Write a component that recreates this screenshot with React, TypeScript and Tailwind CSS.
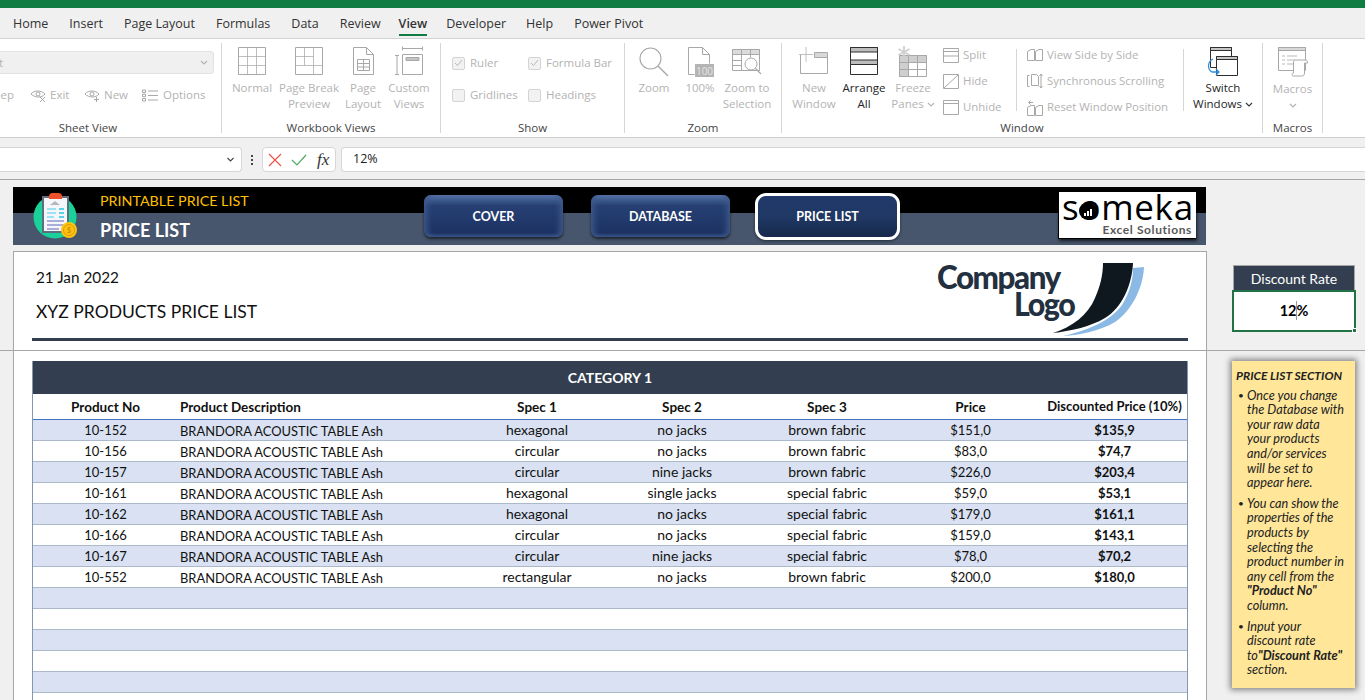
import React from "react";

const G = "#a8a8a8";

function Chev({ c = "#9a9a9a", w = 8 }: { c?: string; w?: number }) {
  return (
    <svg width={w} height={5} viewBox="0 0 8 5" fill="none" stroke={c} strokeWidth="1.1">
      <path d="M1 1l3 3 3-3" />
    </svg>
  );
}

function INormal() {
  return (
    <svg width="30" height="30" viewBox="0 0 30 30" fill="none" stroke={G}>
      <path d="M1.5 1.5h27v27h-27z" />
      <path d="M10.5 1.5v27M19.5 1.5v27M1.5 10.5h27M1.5 19.5h27" strokeOpacity="0.75" />
    </svg>
  );
}
function IBreak() {
  return (
    <svg width="30" height="30" viewBox="0 0 30 30" fill="none" stroke={G}>
      <path d="M1.5 1.5h27v27h-27z" />
      <path d="M10.5 1.5v18M19.5 1.5v27M1.5 10.5h18M1.5 19.5h27" strokeOpacity="0.75" />
    </svg>
  );
}
function ILayout() {
  return (
    <svg width="24" height="30" viewBox="0 0 24 30" fill="none" stroke={G}>
      <path d="M2.5 1.5h13l7 7v20h-20z" />
      <path d="M15.5 1.5v7h7" />
      <path d="M6.5 13.5h12v11h-12zM6.5 17.5h12M6.5 21h12M12.5 13.5v11" />
    </svg>
  );
}
function ICustom() {
  return (
    <svg width="30" height="30" viewBox="0 0 30 30" fill="none" stroke={G}>
      <path d="M8.5 2.5h20M8.5 .5v4M28.5 .5v4" />
      <path d="M1 9.5h4M1 28.5h4M3 9.5v19" />
      <path d="M8.5 8.5h20v20h-20z" />
      <path d="M12 11.5h13v3h-13z" fill="#c4c4c4" />
    </svg>
  );
}
function IZoom() {
  return (
    <svg width="32" height="32" viewBox="0 0 32 32" fill="none" stroke={G} strokeWidth="1.1">
      <circle cx="12.5" cy="12.5" r="10.5" />
      <path d="M20 20l10 10" strokeWidth="1.4" />
    </svg>
  );
}
function I100() {
  return (
    <svg width="28" height="32" viewBox="0 0 28 32" fill="none" stroke={G}>
      <path d="M2.5 28.5v-27h14l7 7v9" />
      <path d="M16.5 1.5v7h7M2.5 28.5h6" />
      <rect x="9" y="18" width="19" height="13" fill="#b4b4b4" stroke="none" />
      <text x="18.5" y="28.5" textAnchor="middle" fontSize="10" fill="#e4e4e4" stroke="none" fontFamily="Open Sans">
        100
      </text>
    </svg>
  );
}
function IZoomSel() {
  return (
    <svg width="32" height="32" viewBox="0 0 32 32" fill="none" stroke={G}>
      <path d="M1.5 3.5h27v21h-27z" />
      <path d="M1.5 3.5h27v5h-27z" fill="#dcdcdc" />
      <path d="M10.5 3.5v21M19.5 3.5v8M1.5 14.5h9M1.5 19.5h9" />
      <circle cx="20" cy="18" r="6" fill="#fff" />
      <path d="M24.5 22.5l5.5 5.5" strokeWidth="1.3" />
    </svg>
  );
}
function INewWin() {
  return (
    <svg width="32" height="30" viewBox="0 0 32 30" fill="none" stroke={G}>
      <path d="M2.5 8.500v19h27v-19H16" />
      <path d="M16.5 6.500h13v5h-13z" fill="#d8d8d8" />
      <path d="M8 1v15M1 8.500h14" strokeOpacity=".7" />
    </svg>
  );
}
function IArrange() {
  return (
    <svg width="30" height="30" viewBox="0 0 30 30" fill="none" stroke="#2e2e2e">
      <path d="M1.5 1.5h27v27h-27z" fill="#fff" />
      <path d="M1.5 1.5h27v4.5h-27zM1.5 14h27v4.5h-27z" fill="#bdbdbd" />
    </svg>
  );
}
function IFreeze() {
  return (
    <svg width="32" height="32" viewBox="0 0 32 32" fill="none" stroke={G}>
      <path d="M2.5 9.500h27v21h-27z" />
      <path d="M2.5 9.500h27v7h-27zM2.5 16.500h9v14h-9z" fill="#cfcfcf" />
      <path d="M11.500 9.500v21M20.500 9.500v21M2.500 23.500h27" />
      <path d="M7 0v12M1.5 3l11 6M12.500 3l-11 6" stroke="#d0d0d0" strokeWidth="1.8" />
    </svg>
  );
}
function ISplit() {
  return (
    <svg width="16" height="15" viewBox="0 0 16 15" fill="none" stroke={G}>
      <path d="M.5.5h15v14H.5zM.5 3.500h15M.5 8h15" />
    </svg>
  );
}
function IHide() {
  return (
    <svg width="16" height="15" viewBox="0 0 16 15" fill="none" stroke={G}>
      <path d="M.5.5h15v14H.5zM1 14L15 1" />
    </svg>
  );
}
function IUnhide() {
  return (
    <svg width="16" height="15" viewBox="0 0 16 15" fill="none" stroke={G}>
      <path d="M.5.5h15v14H.5zM.5 3.500h15" />
    </svg>
  );
}
function ISide() {
  return (
    <svg width="16" height="12" viewBox="0 0 16 12" fill="none" stroke={G}>
      <path d="M.5 2.500L4 .5h3.500v11H.5zM8.500 2.500L12 .5h3.500v11h-7z" />
    </svg>
  );
}
function ISync() {
  return (
    <svg width="16" height="16" viewBox="0 0 16 16" fill="none" stroke={G}>
      <path d="M2.500 2.500H.5v11h2M4.500 1.500h5l2 2v9h-7z" />
      <path d="M14 1v14M12.500 3L14 1l1.500 2M12.500 13l1.500 2 1.500-2" />
    </svg>
  );
}
function IReset() {
  return (
    <svg width="16" height="17" viewBox="0 0 16 17" fill="none" stroke={G}>
      <path d="M.5 8.500L4 6.500h3.500v10H.5zM8.500 8.500L12 6.500h3.500v10h-7z" />
      <path d="M6 3.500H2M3.500 1.500l-2 2 2 2" />
    </svg>
  );
}
function ISwitch() {
  return (
    <svg width="32" height="30" viewBox="0 0 32 30" fill="none">
      <path d="M3.500 1.500h21v20h-21z" stroke="#2e2e2e" fill="#fff" />
      <path d="M3.500 1.500h21v3h-21z" stroke="#2e2e2e" fill="#c8c6c4" />
      <path d="M9.500 10.500h21v19h-21z" stroke="#2e2e2e" fill="#fff" />
      <path d="M9.500 10.500h21v3h-21z" stroke="#2e2e2e" fill="#c8c6c4" />
      <path d="M6 13C1 15-.5 23 5 26h7M9 23l3 3-3 3" stroke="#2f8fdc" strokeWidth="1.3" />
    </svg>
  );
}
function IMacros() {
  return (
    <svg width="30" height="32" viewBox="0 0 30 32" fill="none" stroke={G}>
      <path d="M.5 1.500h27v23H.5z" />
      <path d="M.5 1.500h27v3H.5z" fill="#d8d8d8" />
      <path d="M4 10h3M9 10h10M4 14h3M9 14h8M4 18h3M9 18h8" strokeOpacity=".8" />
      <path d="M17 14h10c2 0 3 1 2.500 3h-3v10c0 2-1 3-3 3h-8c-2 0-2-3 0-3V16c0-1 1-2 1.500-2z" fill="#fff" />
    </svg>
  );
}

function Btn({ w, icon, a, b, dark, chev }: { w: string; icon: React.ReactNode; a: string; b?: React.ReactNode; dark?: boolean; chev?: boolean }) {
  return (
    <div className={`${w} flex flex-col items-center text-[11.5px] leading-[16px] ${dark ? "text-[#262626]" : "text-[#b3b3b3]"}`}>
      <div className="h-[35px] flex justify-center items-start pt-[1px]">{icon}</div>
      <div className="whitespace-nowrap">{a}</div>
      <div className="whitespace-nowrap flex items-center gap-[3px]">
        {b}
        {chev && <Chev c={dark ? "#333" : "#b3b3b3"} />}
      </div>
    </div>
  );
}

function Sep() {
  return <div className="w-px bg-[#d6d6d6] my-[4px] shrink-0" />;
}

function Group({ w, label, children, labelClass = "" }: { w: string; label: string; children: React.ReactNode; labelClass?: string }) {
  return (
    <div className={`${w} shrink-0 flex flex-col overflow-hidden pt-[6px]`}>
      <div className="flex-1 flex min-h-0">{children}</div>
      <div className={`h-[17px] leading-[15px] text-center text-[11.5px] text-[#444] ${labelClass}`}>{label}</div>
    </div>
  );
}

function Check({ on, label, w }: { on?: boolean; label: string; w: string }) {
  return (
    <div className={`${w} h-[20px] flex items-center gap-[5px] text-[11.5px] text-[#b3b3b3]`}>
      <div className="w-[13px] h-[13px] rounded-[2px] border border-[#d4d4d4] bg-[#f2f2f2] flex items-center justify-center">
        {on && (
          <svg width="9" height="8" viewBox="0 0 9 8" fill="none" stroke="#b8b8b8">
            <path d="M1 4l2.500 2.500L8 1" />
          </svg>
        )}
      </div>
      <span className="whitespace-nowrap">{label}</span>
    </div>
  );
}

function SmallRow({ icon, label }: { icon: React.ReactNode; label: string }) {
  return (
    <div className="h-[20px] flex items-center text-[11.4px] text-[#b3b3b3] whitespace-nowrap">
      <div className="w-[20px] flex items-center">{icon}</div>
      <span>{label}</span>
    </div>
  );
}

function Ribbon() {
  return (
    <div className="h-[99px] bg-white border-b border-[#cfcfcf] flex">
      <Group w="w-[221px]" label="Sheet View" labelClass="pr-[45px]">
        <div className="flex flex-col text-[11.5px] text-[#b3b3b3]">
          <div className="mt-[6px] -ml-[60px] w-[274px] h-[23px] bg-[#f0f0f0] border border-[#e2e2e2] rounded-[3px] flex items-center justify-between pl-[23px] pr-[5px]">
            <span>Default</span>
            <Chev c="#b3b3b3" />
          </div>
          <div className="mt-[11px] h-[20px] flex items-center whitespace-nowrap">
            <span className="-ml-[13px] w-[29px]">Keep</span>
            <svg className="ml-[14px]" width="17" height="13" viewBox="0 0 17 13" fill="none" stroke={G}>
              <path d="M1 5c3-4 10-4 14 0-3 4-10 4-14 0z" />
              <circle cx="8" cy="5" r="2" />
              <path d="M10 8l5 5M15 8l-5 5" />
            </svg>
            <span className="ml-[3px] w-[34px]">Exit</span>
            <svg width="17" height="13" viewBox="0 0 17 13" fill="none" stroke={G}>
              <path d="M1 5c3-4 10-4 14 0-3 4-10 4-14 0z" />
              <circle cx="8" cy="5" r="2" />
              <path d="M12.500 8v5M10 10.500h5" />
            </svg>
            <span className="ml-[3px] w-[38px]">New</span>
            <svg width="16" height="13" viewBox="0 0 16 13" fill="none" stroke={G}>
              <path d="M.5 1h3v2.500h-3zM.5 5.200h3v2.500h-3zM.5 9.500h3V12h-3zM6 2h10M6 6.500h10M6 11h10" />
            </svg>
            <span className="ml-[5px]">Options</span>
          </div>
        </div>
      </Group>
      <Sep />
      <Group w="w-[218px]" label="Workbook Views">
        <div className="flex pl-[1px]">
          <Btn w="w-[58px]" icon={<INormal />} a="Normal" />
          <Btn w="w-[56px]" icon={<IBreak />} a="Page Break" b="Preview" />
          <Btn w="w-[52px]" icon={<ILayout />} a="Page" b="Layout" />
          <Btn w="w-[40px]" icon={<ICustom />} a="Custom" b="Views" />
        </div>
      </Group>
      <Sep />
      <Group w="w-[183px]" label="Show">
        <div className="pl-[11px] pt-[8px] flex flex-col gap-[12px]">
          <div className="flex">
            <Check on label="Ruler" w="w-[76px]" />
            <Check on label="Formula Bar" w="w-[90px]" />
          </div>
          <div className="flex">
            <Check label="Gridlines" w="w-[76px]" />
            <Check label="Headings" w="w-[90px]" />
          </div>
        </div>
      </Group>
      <Sep />
      <Group w="w-[156px]" label="Zoom">
        <div className="flex pl-[1px]">
          <Btn w="w-[56px]" icon={<IZoom />} a="Zoom" />
          <Btn w="w-[36px]" icon={<I100 />} a="100%" />
          <Btn w="w-[58px]" icon={<IZoomSel />} a="Zoom to" b="Selection" />
        </div>
      </Group>
      <Sep />
      <Group w="w-[480px]" label="Window">
        <div className="flex pl-[4px]">
          <Btn w="w-[56px]" icon={<INewWin />} a="New" b="Window" />
          <Btn w="w-[44px]" icon={<IArrange />} a="Arrange" b="All" dark />
          <Btn w="w-[54px]" icon={<IFreeze />} a="Freeze" b="Panes" chev />
          <div className="ml-[3px] w-[73px] flex flex-col gap-[6px]">
            <SmallRow icon={<ISplit />} label="Split" />
            <SmallRow icon={<IHide />} label="Hide" />
            <SmallRow icon={<IUnhide />} label="Unhide" />
          </div>
          <div className="w-px h-[62px] mt-[4px] bg-[#d6d6d6]" />
          <div className="ml-[10px] w-[156px] flex flex-col gap-[6px]">
            <SmallRow icon={<ISide />} label="View Side by Side" />
            <SmallRow icon={<ISync />} label="Synchronous Scrolling" />
            <SmallRow icon={<IReset />} label="Reset Window Position" />
          </div>
          <div className="w-px h-[62px] mt-[4px] bg-[#d6d6d6]" />
          <Btn w="w-[78px]" icon={<ISwitch />} a="Switch" b="Windows" dark chev />
        </div>
      </Group>
      <Sep />
      <Group w="w-[59px]" label="Macros">
        <div className="w-full flex flex-col items-center text-[11.5px] text-[#b3b3b3] leading-[16px]">
          <div className="h-[36px] pt-[1px]">
            <IMacros />
          </div>
          <div>Macros</div>
          <div className="h-[16px] flex items-center">
            <Chev c="#b3b3b3" />
          </div>
        </div>
      </Group>
      <Sep />
    </div>
  );
}

function FormulaBar() {
  return (
    <div className="h-[42px] bg-[#f0f0f0] border-b border-[#a6a6a6] pt-[9px] flex items-start">
      <div className="w-[242px] h-[25px] bg-white border border-[#d6d6d6] border-l-0 rounded-r-[4px] flex items-center justify-end pr-[5px]">
        <Chev c="#444" w={11} />
      </div>
      <div className="w-[20px] h-[25px] flex flex-col items-center justify-center gap-[2px]">
        <i className="w-[2px] h-[2px] bg-[#444] block" />
        <i className="w-[2px] h-[2px] bg-[#444] block" />
        <i className="w-[2px] h-[2px] bg-[#444] block" />
      </div>
      <div className="w-[74px] h-[25px] bg-white border border-[#d6d6d6] rounded-[4px] flex items-center pl-[5px] gap-[9px]">
        <svg width="14" height="14" viewBox="0 0 14 14" fill="none" stroke="#e8534a" strokeWidth="1.2">
          <path d="M1 1l12 12M13 1L1 13" />
        </svg>
        <svg width="16" height="12" viewBox="0 0 16 12" fill="none" stroke="#4fa866" strokeWidth="1.2">
          <path d="M1 6l5 5L15 1" />
        </svg>
        <span className="ml-[1px] font-['Liberation_Serif',serif] italic text-[17px] leading-[20px] text-[#333]">fx</span>
      </div>
      <div className="ml-[5px] flex-1 h-[25px] bg-white border border-[#d6d6d6] border-r-0 rounded-l-[4px] flex items-center pl-[11px] text-[12.5px] text-[#222]">
        12%
      </div>
    </div>
  );
}

function Clip() {
  return (
    <svg width="48" height="48" viewBox="0 0 48 48" fill="none">
      <circle cx="22" cy="24" r="21.500" fill="#1ad199" />
      <path d="M9 3h27v37H9z" fill="#5f6d80" />
      <path d="M11 5h23v33H11z" fill="#f4f6fa" />
      <path d="M16 3c0-2 2-3 3-3h7c1 0 3 1 3 3v3H16z" fill="#f0512d" />
      <path d="M17 12l5-4 5 4z" fill="#b4b7bd" />
      <path d="M14 16h9M14 20h9M14 24h7" stroke="#7fdcf0" strokeWidth="1.4" />
      <path d="M26 16h5M26 20h5M26 24h5" stroke="#27c3e6" strokeWidth="1.4" />
      <path d="M14 28h17M14 32h17M14 36h12" stroke="#8f95d0" strokeWidth="1.6" />
      <circle cx="36" cy="37" r="8" fill="#fbc512" />
      <circle cx="36" cy="37" r="5.500" fill="none" stroke="#e29a05" />
      <text x="36" y="40" textAnchor="middle" fontSize="8" fontWeight="700" fill="#d98d00" fontFamily="Lato">$</text>
    </svg>
  );
}

function NavBtn({ label, active }: { label: string; active?: boolean }) {
  return active ? (
    <div className="w-[145px] h-[47px] pt-[1px] rounded-[11px] border-[3px] border-white bg-gradient-to-b from-[#22396a] via-[#1f3864] to-[#17294c] shadow-[0_1px_3px_rgba(0,0,0,.5)] flex items-center justify-center text-white font-bold text-[12.5px]">
      {label}
    </div>
  ) : (
    <div className="w-[139px] h-[42px] pt-[2px] rounded-[7px] bg-[linear-gradient(180deg,#5a76aa_0%,#3a5688_14%,#263f72_26%,#21396b_60%,#1d3263_90%,#3a5487_100%)] shadow-[inset_7px_0_6px_-4px_#3f5a8c,inset_-7px_0_6px_-4px_#3f5a8c,0_2px_3px_rgba(0,0,0,.6)] flex items-center justify-center text-white font-bold text-[12.5px]">
      {label}
    </div>
  );
}

function Banner() {
  return (
    <div className="relative w-[1193px] h-[58px] flex flex-col">
      <div className="h-[26px] bg-black pl-[87px] text-[14.3px] leading-[27px] text-[#ffc000]">PRINTABLE PRICE LIST</div>
      <div className="h-[32px] bg-[#47566c] pl-[87px] text-[18px] leading-[34px] font-bold text-white">PRICE LIST</div>
      <div className="absolute left-[20px] top-[6px]">
        <Clip />
      </div>
      <div className="absolute left-[411px] top-[8px] flex gap-[28px]">
        <NavBtn label="COVER" />
        <NavBtn label="DATABASE" />
      </div>
      <div className="absolute left-[742px] top-[6px]">
        <NavBtn label="PRICE LIST" active />
      </div>
      <div className="absolute left-[1045px] top-[5px] w-[138px] h-[47px] bg-white border-l border-b border-black shadow-[1px_2px_3px_rgba(0,0,0,.7)] text-black">
        <div className="h-[30px] pl-[3px] text-[35px] leading-[30px] font-['Open_Sans',sans-serif] font-medium tracking-[.7px] whitespace-nowrap">someka</div>
        <div className="absolute left-[20px] top-[10px] w-[18px] h-[18px] rounded-full bg-black flex items-end justify-center gap-[1px] pb-[4px]">
          <i className="block w-[2px] h-[3px] bg-white" />
          <i className="block w-[2px] h-[5px] bg-white" />
          <i className="block w-[2px] h-[7px] bg-white" />
        </div>
        <div className="absolute right-[4px] bottom-[1px] text-[12px] leading-[14px] font-bold text-[#595959] tracking-[.6px]">Excel Solutions</div>
      </div>
    </div>
  );
}

function CompanyLogo() {
  return (
    <div className="absolute left-[909px] top-[7px] w-[229px] h-[78px]">
      <svg className="absolute left-0 top-0" width="229" height="78" viewBox="923 259 229 78">
        <path d="M1133 268L1144 267C1143 290 1130 312 1115 322C1100 331 1080 335 1063 336C1085 331 1110 322 1122 305C1130 292 1133 280 1133 268Z" fill="#89b9e4" />
        <path d="M1103 263L1133 263C1132 285 1122 308 1105 318C1090 327 1070 331 1053 333C1072 327 1088 315 1095 298C1100 287 1103 275 1103 263Z" fill="#10181f" />
      </svg>
      <div className="absolute left-[14px] -top-[1px] text-[33px] leading-[36px] font-black text-[#23303f] tracking-[-1.5px] scale-x-[.95] origin-left">Company</div>
      <div className="absolute left-[91px] top-[26px] text-[33px] leading-[36px] font-black text-[#23303f] tracking-[-1.5px] scale-x-[.92] origin-left">Logo</div>
    </div>
  );
}

function TopArea() {
  return (
    <div className="h-[171px] border-b border-[#a6a6a6] flex pl-[13px] pt-[7px] shrink-0">
      <div className="w-[1194px] flex flex-col">
        <Banner />
        <div className="relative mt-[6px] flex-1 bg-white border border-b-0 border-[#a6a6a6] pl-[22px]">
          <div className="pt-[14px] text-[15.3px] leading-[22px] text-[#111]">21 Jan 2022</div>
          <div className="pt-[11px] text-[17.5px] leading-[26px] text-[#111]">XYZ PRODUCTS PRICE LIST</div>
          <div className="ml-[-4px] mt-[13px] w-[1156px] h-[3px] bg-[#333f50]" />
          <CompanyLogo />
        </div>
      </div>
      <div className="ml-[25px] mt-[78px] w-[124px] flex flex-col">
        <div className="mx-[1px] h-[25px] bg-[#333f50] border border-[#a6a6a6] border-b-0 text-white text-center text-[14px] leading-[26px]">Discount Rate</div>
        <div className="relative h-[42px] bg-white border-2 border-[#217346] flex items-center justify-center font-bold text-[14.500px] text-black">
          12%
          <i className="absolute left-[62px] top-[9px] w-px h-[19px] bg-[#9a9a9a] block" />
          <i className="absolute -right-[3px] -bottom-[3px] w-[5px] h-[5px] bg-[#217346] border border-white block" />
        </div>
      </div>
    </div>
  );
}

const rows = [
  ["10-152", "hexagonal", "no jacks", "brown fabric", "$151,0", "$135,9"],
  ["10-156", "circular", "no jacks", "brown fabric", "$83,0", "$74,7"],
  ["10-157", "circular", "nine jacks", "brown fabric", "$226,0", "$203,4"],
  ["10-161", "hexagonal", "single jacks", "special fabric", "$59,0", "$53,1"],
  ["10-162", "hexagonal", "no jacks", "special fabric", "$179,0", "$161,1"],
  ["10-166", "circular", "no jacks", "special fabric", "$159,0", "$143,1"],
  ["10-167", "circular", "nine jacks", "special fabric", "$78,0", "$70,2"],
  ["10-552", "rectangular", "no jacks", "brown fabric", "$200,0", "$180,0"],
];

const COLS = "grid grid-cols-[145px_287px_144px_146px_144px_143px_145px]";

function PriceTable() {
  const blanks = [0, 1, 2, 3, 4, 5];
  return (
    <div className="ml-[18px] w-[1156px] border-x border-[#8497b0] text-[14px] text-[#111]">
      <div className="h-[33px] bg-[#333f50] text-white font-bold text-center leading-[34px] text-[14px]">CATEGORY 1</div>
      <div className={`${COLS} h-[26px] bg-white border-b border-[#4472c4] font-bold leading-[26px]`}>
        <div className="text-center text-[13.5px]">Product No</div>
        <div className="pl-[2px] text-[13.5px]">Product Description</div>
        <div className="text-center text-[13.5px]">Spec 1</div>
        <div className="text-center text-[13.5px]">Spec 2</div>
        <div className="text-center text-[13.5px]">Spec 3</div>
        <div className="text-center text-[13.5px]">Price</div>
        <div className="text-center text-[13px] leading-[25px]">Discounted Price (10%)</div>
      </div>
      {rows.map((r, i) => (
        <div key={r[0]} className={`${COLS} h-[21px] border-b border-[#acb9ca] leading-[20px] ${i % 2 === 0 ? "bg-[#d9e1f2]" : "bg-white"}`}>
          <div className="text-center text-[13px] leading-[21px]">{r[0]}</div>
          <div className="pl-[2px] pt-[1px] text-[12.9px]">BRANDORA ACOUSTIC TABLE Ash</div>
          <div className="text-center">{r[1]}</div>
          <div className="text-center">{r[2]}</div>
          <div className="text-center">{r[3]}</div>
          <div className="text-center text-[13px] leading-[21px]">{r[4]}</div>
          <div className="text-center font-bold text-[13px] leading-[21px]">{r[5]}</div>
        </div>
      ))}
      {blanks.map((b) => (
        <div key={b} className={`h-[21px] border-b border-[#acb9ca] ${b % 2 === 0 ? "bg-[#d9e1f2]" : "bg-white"}`} />
      ))}
    </div>
  );
}

function Note() {
  return (
    <div className="ml-[25px] mt-[10px] w-[123px] h-[327px] bg-[#ffe699] shadow-[0_0_6px_2px_rgba(0,0,0,.45)] pt-[8px] pl-[4px] text-[12.7px] leading-[14.600px] italic text-[#222] whitespace-nowrap">
      <div className="font-bold text-[12px]">PRICE LIST SECTION</div>
      <div className="mt-[4px] flex">
        <span className="w-[11px] pl-[2px] not-italic text-[10px]">•</span>
        <div>
          Once you change<br />the Database with<br />your raw data<br />your products<br />and/or services<br />will be set to<br />appear here.
        </div>
      </div>
      <div className="mt-[6px] flex">
        <span className="w-[11px] pl-[2px] not-italic text-[10px]">•</span>
        <div>
          You can show the<br />properties of the<br />products by<br />selecting the<br />product number in<br />any cell from the<br /><b>"Product No"</b><br />column.
        </div>
      </div>
      <div className="mt-[6px] flex">
        <span className="w-[11px] pl-[2px] not-italic text-[10px]">•</span>
        <div>
          Input your<br />discount rate<br />to<b>"Discount Rate"</b><br />section.
        </div>
      </div>
    </div>
  );
}

export default function App() {
  return (
    <div className="w-[1365px] h-[700px] overflow-hidden bg-[#f0f0f0] flex flex-col font-['Open_Sans',sans-serif]">
      <div className="h-[8px] bg-[#107c41] shrink-0" />
      <div className="h-[31px] bg-[#f0f0f0] border-b border-[#d2d2d2] flex gap-[21px] pl-[13px] text-[12.500px] text-[#333] shrink-0">
        {["Home", "Insert", "Page Layout", "Formulas", "Data", "Review"].map((t) => (
          <div key={t} className="leading-[31px]">{t}</div>
        ))}
        <div className="relative -ml-[3px] leading-[31px] font-semibold">
          View
          <i className="absolute left-0 right-0 bottom-[2px] h-[2px] bg-[#107c41] block" />
        </div>
        <div className="-ml-[2px] leading-[31px]">Developer</div>
        <div className="-ml-[1px] leading-[31px]">Help</div>
        <div className="leading-[31px]">Power Pivot</div>
      </div>
      <div className="shrink-0">
        <Ribbon />
      </div>
      <div className="shrink-0">
        <FormulaBar />
      </div>
      <div className="flex-1 min-h-0 flex flex-col font-['Lato',sans-serif]">
        <TopArea />
        <div className="flex-1 min-h-0 flex pl-[13px]">
          <div className="w-[1194px] bg-white border-x border-[#a6a6a6] pt-[10px]">
            <PriceTable />
          </div>
          <Note />
        </div>
      </div>
    </div>
  );
}
